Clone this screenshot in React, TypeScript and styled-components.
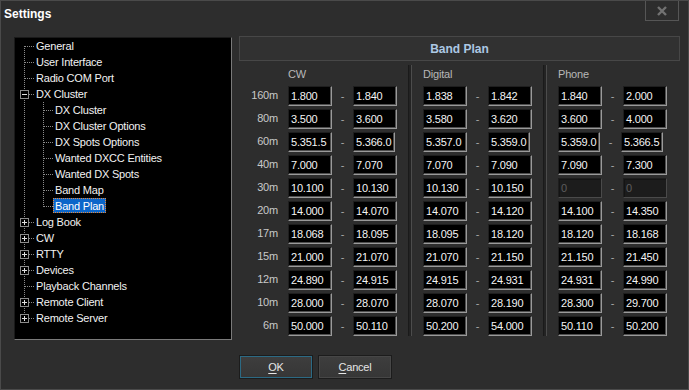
import React from 'react'
import styled, { createGlobalStyle, css } from 'styled-components'

const GlobalStyle = createGlobalStyle`
  html, body {
    margin: 0;
    padding: 0;
    background: #2d2d2d;
  }
  body {
    font-family: 'Liberation Sans', Arial, sans-serif;
    font-size: 11px;
    letter-spacing: -0.2px;
    color: #e8e8e8;
  }
`

type Expander = 'plus' | 'minus'
type RootGuide = 'first' | 'mid' | 'last' | 'pass'
type ChildGuide = 'mid' | 'last'

interface TreeNode {
  label: string
  level: 0 | 1
  expander?: Expander
  selected?: boolean
}

const treeNodes: TreeNode[] = [
  { label: 'General', level: 0 },
  { label: 'User Interface', level: 0 },
  { label: 'Radio COM Port', level: 0 },
  { label: 'DX Cluster', level: 0, expander: 'minus' },
  { label: 'DX Cluster', level: 1 },
  { label: 'DX Cluster Options', level: 1 },
  { label: 'DX Spots Options', level: 1 },
  { label: 'Wanted DXCC Entities', level: 1 },
  { label: 'Wanted DX Spots', level: 1 },
  { label: 'Band Map', level: 1 },
  { label: 'Band Plan', level: 1, selected: true },
  { label: 'Log Book', level: 0, expander: 'plus' },
  { label: 'CW', level: 0, expander: 'plus' },
  { label: 'RTTY', level: 0, expander: 'plus' },
  { label: 'Devices', level: 0, expander: 'plus' },
  { label: 'Playback Channels', level: 0 },
  { label: 'Remote Client', level: 0, expander: 'plus' },
  { label: 'Remote Server', level: 0, expander: 'plus' },
]

interface Range {
  from: string
  to: string
  disabled?: boolean
  narrowFrom?: boolean
  narrowTo?: boolean
}

interface Mode {
  name: string
  ranges: Range[]
}

const bands = ['160m', '80m', '60m', '40m', '30m', '20m', '17m', '15m', '12m', '10m', '6m']

const modes: Mode[] = [
  {
    name: 'CW',
    ranges: [
      { from: '1.800', to: '1.840' },
      { from: '3.500', to: '3.600' },
      { from: '5.351.5', to: '5.366.0', narrowTo: true },
      { from: '7.000', to: '7.070' },
      { from: '10.100', to: '10.130' },
      { from: '14.000', to: '14.070' },
      { from: '18.068', to: '18.095' },
      { from: '21.000', to: '21.070' },
      { from: '24.890', to: '24.915' },
      { from: '28.000', to: '28.070' },
      { from: '50.000', to: '50.110' },
    ],
  },
  {
    name: 'Digital',
    ranges: [
      { from: '1.838', to: '1.842' },
      { from: '3.580', to: '3.620' },
      { from: '5.357.0', to: '5.359.0', narrowTo: true },
      { from: '7.070', to: '7.090' },
      { from: '10.130', to: '10.150' },
      { from: '14.070', to: '14.120' },
      { from: '18.095', to: '18.120' },
      { from: '21.070', to: '21.150' },
      { from: '24.915', to: '24.931' },
      { from: '28.070', to: '28.190' },
      { from: '50.200', to: '54.000' },
    ],
  },
  {
    name: 'Phone',
    ranges: [
      { from: '1.840', to: '2.000' },
      { from: '3.600', to: '4.000' },
      { from: '5.359.0', to: '5.366.5', narrowFrom: true, narrowTo: true },
      { from: '7.090', to: '7.300' },
      { from: '0', to: '0', disabled: true },
      { from: '14.100', to: '14.350' },
      { from: '18.120', to: '18.168' },
      { from: '21.150', to: '21.450' },
      { from: '24.931', to: '24.990' },
      { from: '28.300', to: '29.700' },
      { from: '50.110', to: '50.200' },
    ],
  },
]

/* ---------- window chrome ---------- */

const Window = styled.div`
  width: 689px;
  height: 390px;
  box-sizing: border-box;
  border: 1px solid #4a4a4a;
  background: #2d2d2d;
  display: flex;
  flex-direction: column;
  overflow: hidden;
`

const TitleBar = styled.div`
  height: 35px;
  display: flex;
  align-items: flex-start;
  flex-shrink: 0;
`

const Title = styled.div`
  margin: 5px 0 0 3px;
  font-size: 12px;
  line-height: 16px;
  font-weight: bold;
  letter-spacing: 0;
  color: #ffffff;
`

const CloseButton = styled.div`
  margin-left: auto;
  margin-right: 9px;
  width: 34px;
  height: 20px;
  box-sizing: border-box;
  border: 1px solid #565656;
  border-top: none;
  display: flex;
  align-items: center;
  justify-content: center;
`

const Body = styled.div`
  height: 304px;
  display: flex;
  gap: 7px;
  padding: 0 8px 0 13px;
  flex-shrink: 0;
`

const Footer = styled.div`
  display: flex;
  gap: 5px;
  padding: 15px 0 0 238px;
`

const Button = styled.div<{ $default?: boolean }>`
  width: 74px;
  height: 24px;
  box-sizing: border-box;
  border: 1px solid #1c1c1c;
  background: linear-gradient(#3e3e3e, #363636);
  color: #e6e6e6;
  font-size: 11px;
  display: flex;
  align-items: center;
  justify-content: center;
  box-shadow: inset 0 0 0 1px ${(p) => (p.$default ? '#2c6a84' : '#474747')};

  u {
    text-decoration: underline;
    text-underline-offset: 2px;
  }
`

/* ---------- tree ---------- */

const TreePanel = styled.div`
  width: 218px;
  margin-top: 1px;
  box-sizing: border-box;
  background: #000000;
  border-top: 1px solid #1a1a1a;
  border-left: 1px solid #1a1a1a;
  border-right: 1px solid #7a7a7a;
  border-bottom: 1px solid #7a7a7a;
  display: flex;
  flex-direction: column;
`

const TreeRow = styled.div`
  height: 16px;
  display: flex;
  align-items: flex-start;
`

const TreeLabel = styled.div<{ $selected?: boolean }>`
  height: 15px;
  box-sizing: border-box;
  padding: 1px 1px 0 1px;
  line-height: 13px;
  white-space: nowrap;
  color: #f2f2f2;
  border: 1px solid transparent;
  ${(p) =>
    p.$selected &&
    css`
      background: #0c66c9;
      color: #ffffff;
      border: 1px dotted #e8893a;
    `}
`

const LINE = '#8a8a8a'

const GuideCell = ({
  kind,
  expander,
}: {
  kind: RootGuide | ChildGuide
  expander?: Expander
}) => {
  const y1 = kind === 'first' ? 8 : 0
  const y2 = kind === 'last' ? 9 : 16
  return (
    <svg width="19" height="16" viewBox="0 0 19 16" shapeRendering="crispEdges" style={{ flexShrink: 0 }}>
      <line x1="9.5" y1={y1} x2="9.5" y2={y2} stroke={LINE} strokeDasharray="1 1" />
      {kind !== 'pass' && (
        <line x1={expander ? 14 : 10} y1="8.5" x2="19" y2="8.5" stroke={LINE} strokeDasharray="1 1" />
      )}
      {expander && (
        <>
          <rect x="5.5" y="4.5" width="8" height="8" fill="#000" stroke="#8c8c8c" />
          <line x1="7" y1="8.5" x2="12" y2="8.5" stroke="#e0e0e0" />
          {expander === 'plus' && <line x1="9.5" y1="6" x2="9.5" y2="11" stroke="#e0e0e0" />}
        </>
      )}
    </svg>
  )
}

const Tree = () => {
  const lastRoot = treeNodes.length - 1
  const childIdx = treeNodes.map((n, i) => (n.level === 1 ? i : -1)).filter((i) => i >= 0)
  const lastChild = childIdx[childIdx.length - 1]

  return (
    <TreePanel>
      {treeNodes.map((node, i) => {
        let rootKind: RootGuide = 'mid'
        if (node.level === 1) rootKind = 'pass'
        else if (i === 0) rootKind = 'first'
        else if (i === lastRoot) rootKind = 'last'
        return (
          <TreeRow key={i}>
            <GuideCell kind={rootKind} expander={node.level === 0 ? node.expander : undefined} />
            {node.level === 1 && <GuideCell kind={i === lastChild ? 'last' : 'mid'} />}
            <TreeLabel $selected={node.selected}>{node.label}</TreeLabel>
          </TreeRow>
        )
      })}
    </TreePanel>
  )
}

/* ---------- band plan ---------- */

const PlanPanel = styled.div`
  flex: 1;
  display: flex;
  flex-direction: column;
`

const PlanHeader = styled.div`
  height: 25px;
  box-sizing: border-box;
  border: 1px solid #474747;
  background: #313131;
  display: flex;
  align-items: center;
  justify-content: center;
  font-size: 12px;
  font-weight: bold;
  letter-spacing: 0;
  color: #acc8e4;
`

const PlanGrid = styled.div`
  display: flex;
  padding: 4px 0 0 9px;
`

const LabelColumn = styled.div`
  width: 30px;
  margin-right: 10px;
  padding-top: 21px;
  display: flex;
  flex-direction: column;
  gap: 3px;
`

const BandLabel = styled.div`
  height: 20px;
  line-height: 18px;
  text-align: right;
  color: #c8c8c8;
`

const ModeGroup = styled.div`
  width: 109px;
  display: flex;
  flex-direction: column;
  gap: 3px;
`

const ModeName = styled.div`
  height: 18px;
  line-height: 18px;
  color: #b8b8b8;
`

const RangeRow = styled.div`
  height: 20px;
  display: flex;
  align-items: center;
`

const Field = styled.div<{ $disabled?: boolean; $narrow?: boolean }>`
  width: ${(p) => (p.$narrow ? 42 : 44)}px;
  height: 20px;
  box-sizing: border-box;
  padding-left: 2px;
  line-height: 18px;
  background: #000000;
  color: #f4f4f4;
  border-top: 1px solid #1e1e1e;
  border-left: 1px solid #1e1e1e;
  border-right: 1px solid #9a9a9a;
  border-bottom: 1px solid #9a9a9a;
  box-shadow: inset -1px -1px 0 #4e4e4e;
  overflow: hidden;
  white-space: nowrap;
  ${(p) =>
    p.$disabled &&
    css`
      background: #1c1c1c;
      color: #5c5c5c;
      border-right-color: #4a4a4a;
      border-bottom-color: #4a4a4a;
      box-shadow: inset 1px 1px 0 #141414;
    `}
`

const Dash = styled.div`
  width: 21px;
  text-align: center;
  color: #a8a8a8;
  line-height: 18px;
`

const Groove = styled.div`
  width: 2px;
  margin: 0 11px;
  background: #232323;
  border-left: 1px solid #1a1a1a;
  border-right: 1px solid #4c4c4c;
`

const BandPlan = () => (
  <PlanPanel>
    <PlanHeader>Band Plan</PlanHeader>
    <PlanGrid>
      <LabelColumn>
        {bands.map((b) => (
          <BandLabel key={b}>{b}</BandLabel>
        ))}
      </LabelColumn>
      {modes.map((mode, mi) => (
        <React.Fragment key={mode.name}>
          {mi > 0 && <Groove />}
          <ModeGroup>
            <ModeName>{mode.name}</ModeName>
            {mode.ranges.map((r, ri) => (
              <RangeRow key={ri}>
                <Field $disabled={r.disabled} $narrow={r.narrowFrom}>
                  {r.from}
                </Field>
                <Dash>-</Dash>
                <Field $disabled={r.disabled} $narrow={r.narrowTo}>
                  {r.to}
                </Field>
              </RangeRow>
            ))}
          </ModeGroup>
        </React.Fragment>
      ))}
    </PlanGrid>
  </PlanPanel>
)

export default function App() {
  return (
    <>
      <GlobalStyle />
      <Window>
        <TitleBar>
          <Title>Settings</Title>
          <CloseButton>
            <svg width="10" height="10" viewBox="0 0 10 10">
              <path d="M1 1 L9 9 M9 1 L1 9" stroke="#727272" strokeWidth="2.4" />
            </svg>
          </CloseButton>
        </TitleBar>
        <Body>
          <Tree />
          <BandPlan />
        </Body>
        <Footer>
          <Button $default>
            <span>
              <u>O</u>K
            </span>
          </Button>
          <Button>
            <span>
              <u>C</u>ancel
            </span>
          </Button>
        </Footer>
      </Window>
    </>
  )
}
